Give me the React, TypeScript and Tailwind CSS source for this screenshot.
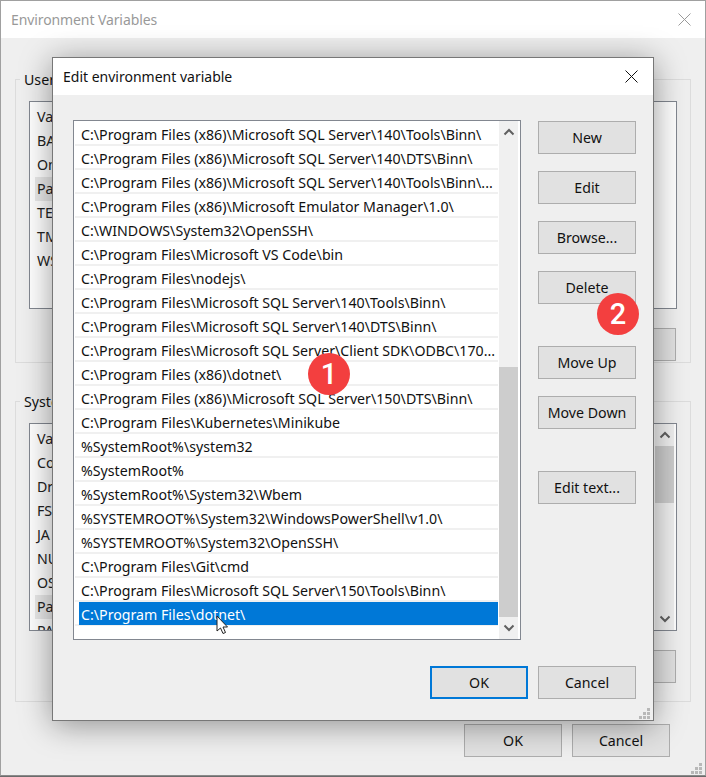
const paths = [
  "C:\\Program Files (x86)\\Microsoft SQL Server\\140\\Tools\\Binn\\",
  "C:\\Program Files (x86)\\Microsoft SQL Server\\140\\DTS\\Binn\\",
  "C:\\Program Files (x86)\\Microsoft SQL Server\\140\\Tools\\Binn\\...",
  "C:\\Program Files (x86)\\Microsoft Emulator Manager\\1.0\\",
  "C:\\WINDOWS\\System32\\OpenSSH\\",
  "C:\\Program Files\\Microsoft VS Code\\bin",
  "C:\\Program Files\\nodejs\\",
  "C:\\Program Files\\Microsoft SQL Server\\140\\Tools\\Binn\\",
  "C:\\Program Files\\Microsoft SQL Server\\140\\DTS\\Binn\\",
  "C:\\Program Files\\Microsoft SQL Server\\Client SDK\\ODBC\\170...",
  "C:\\Program Files (x86)\\dotnet\\",
  "C:\\Program Files (x86)\\Microsoft SQL Server\\150\\DTS\\Binn\\",
  "C:\\Program Files\\Kubernetes\\Minikube",
  "%SystemRoot%\\system32",
  "%SystemRoot%",
  "%SystemRoot%\\System32\\Wbem",
  "%SYSTEMROOT%\\System32\\WindowsPowerShell\\v1.0\\",
  "%SYSTEMROOT%\\System32\\OpenSSH\\",
  "C:\\Program Files\\Git\\cmd",
  "C:\\Program Files\\Microsoft SQL Server\\150\\Tools\\Binn\\",
  "C:\\Program Files\\dotnet\\",
];

function Btn({ label, blue }: { label: string; blue?: boolean }) {
  return (
    <button
      className={
        blue
          ? "w-[98px] h-[33px] shrink-0 bg-[#e1e1e1] border-2 border-[#0078d7] text-[14.2px] text-[#111]"
          : "w-[98px] h-[33px] shrink-0 bg-[#e1e1e1] border border-[#adadad] text-[14.2px] text-[#111]"
      }
    >
      {label}
    </button>
  );
}

function Chevron({ down }: { down?: boolean }) {
  return (
    <svg width="12" height="8" viewBox="0 0 12 8" className="text-[#606060]">
      <path
        d={down ? "M1.5 1.5 L6 6 L10.5 1.5" : "M1.5 6.5 L6 2 L10.5 6.5"}
        fill="none"
        stroke="currentColor"
        strokeWidth="2"
      />
    </svg>
  );
}

function X({ color }: { color: string }) {
  return (
    <svg width="13" height="13" viewBox="0 0 13 13">
      <path d="M0.5 0.5 L12.5 12.5 M12.5 0.5 L0.5 12.5" stroke={color} strokeWidth="1" fill="none" />
    </svg>
  );
}

function Grip() {
  const dots = [
    [8, 0],
    [4, 4],
    [8, 4],
    [0, 8],
    [4, 8],
    [8, 8],
  ];
  return (
    <svg width="11" height="11" viewBox="0 0 11 11">
      {dots.map(([x, y]) => (
        <rect key={`${x}-${y}`} x={x} y={y} width="3" height="3" fill="#b8b8b8" />
      ))}
    </svg>
  );
}

function BackRow({ label, active }: { label: string; active?: boolean }) {
  return (
    <div
      className={
        active
          ? "h-6 ml-[5px] w-[100px] pl-[2px] leading-6 bg-[#e9e9e9] whitespace-nowrap"
          : "h-6 ml-[5px] pl-[2px] leading-6 whitespace-nowrap"
      }
    >
      {label}
    </div>
  );
}

function Group({
  title,
  rows,
  height,
  scroll,
}: {
  title: string;
  rows: [string, boolean?][];
  height: string;
  scroll?: boolean;
}) {
  return (
    <div className={`relative ${height} border border-[#dcdcdc] px-[13px] pt-[21px]`}>
      <div className="absolute left-[4px] top-[-12px] bg-[#efefef] px-[4px] leading-6">{title}</div>
      <div className="flex h-[208px] border border-[#828790] bg-white overflow-hidden">
        <div className="flex-1 pt-[3px] overflow-hidden text-[#222]">
          {rows.map(([r, a], i) => (
            <BackRow key={i} label={r} active={a} />
          ))}
        </div>
        {scroll && (
          <div className="w-[19px] mr-[2px] flex flex-col bg-[#f0f0f0] items-center">
            <div className="h-[22px] flex items-center justify-center shrink-0">
              <Chevron />
            </div>
            <div className="w-full h-[57px] bg-[#cdcdcd] shrink-0" />
            <div className="flex-1" />
            <div className="h-[22px] flex items-center justify-center shrink-0">
              <Chevron down />
            </div>
          </div>
        )}
      </div>
      <div className="flex justify-end pr-[1px] mt-[19px]">
        <Btn label="Delete" />
      </div>
    </div>
  );
}

export default function App() {
  return (
    <div className="relative w-[706px] h-[777px] overflow-hidden bg-[#6b6b6b] text-[14.2px] text-[#111] [font-family:'Noto_Sans',sans-serif]">
      {/* parent window */}
      <div className="flex flex-col h-[776px] border border-[#a0a0a0] border-b-[#8a8a8a] bg-[#efefef]">
        <div className="h-[37px] shrink-0 bg-white flex items-center justify-between pl-[10px] pr-[14px] text-[#999] text-[14px] tracking-[-0.1px]">
          <span>Environment Variables</span>
          <X color="#9a9a9a" />
        </div>
        <div className="flex flex-col px-[14px] pt-[41px] gap-[38px]">
          <Group
            title="User variables"
            height="h-[284px]"
            rows={[["Variable"], ["BA"], ["On"], ["Path", true], ["TEMP"], ["TMP"], ["WS"]]}
          />
          <Group
            title="System variables"
            height="h-[301px]"
            scroll
            rows={[["Variable"], ["Co"], ["Dr"], ["FS"], ["JA"], ["NU"], ["OS"], ["Path", true], ["PA"]]}
          />
        </div>
        <div className="flex justify-end gap-[10px] pr-[35px] mt-[22px]">
          <Btn label="OK" />
          <Btn label="Cancel" />
        </div>
        <div className="flex justify-end pr-[3px] mt-[6px]">
          <Grip />
        </div>
      </div>

      {/* child dialog */}
      <div className="absolute left-[52px] top-[57px] w-[602px] h-[664px] flex flex-col border border-[#777] bg-[#efefef] shadow-[0_4px_30px_rgba(0,0,0,0.4)]">
        <div className="h-[37px] shrink-0 bg-white flex items-center justify-between pl-[10px] pr-[15px]">
          <span className="text-[14px] text-[#111]">Edit environment variable</span>
          <X color="#111" />
        </div>
        <div className="relative flex-1 flex flex-col pt-[25px] pl-[20px] pr-[17px]">
          <div className="flex gap-[17px]">
            <div className="flex w-[448px] h-[520px] border border-[#828790] bg-white">
              <div className="w-[424px] pl-[1px] pt-[1px]">
                {paths.map((p, i) =>
                  i === paths.length - 1 ? (
                    <div key={p} className="h-6 pl-[4px] border-b-2 border-[#f0f0f0]">
                      <div className="h-[23px] pl-[2px] pt-[1px] leading-[24px] bg-[#0078d7] text-white whitespace-nowrap">{p}</div>
                    </div>
                  ) : (
                    <div key={p} className="h-6 pl-[6px] pt-[1px] leading-[24px] border-b-2 border-[#f0f0f0] whitespace-nowrap">
                      {p}
                    </div>
                  ),
                )}
              </div>
              <div className="w-[19px] ml-[1px] mr-[2px] flex flex-col bg-[#f0f0f0]">
                <div className="h-[22px] flex items-center justify-center shrink-0">
                  <Chevron />
                </div>
                <div className="flex-1" />
                <div className="h-[250px] bg-[#cdcdcd] shrink-0" />
                <div className="h-[22px] flex items-center justify-center shrink-0">
                  <Chevron down />
                </div>
              </div>
            </div>
            <div className="flex flex-col pt-[1px]">
              <div className="flex flex-col gap-[17px]">
                <Btn label="New" />
                <Btn label="Edit" />
                <Btn label="Browse..." />
                <Btn label="Delete" />
              </div>
              <div className="flex flex-col gap-[17px] mt-[42px]">
                <Btn label="Move Up" />
                <Btn label="Move Down" />
              </div>
              <div className="mt-[42px]">
                <Btn label="Edit text..." />
              </div>
            </div>
          </div>
          <div className="flex justify-end gap-[10px] mt-[26px]">
            <Btn label="OK" blue />
            <Btn label="Cancel" />
          </div>
          <div className="absolute right-[3px] bottom-[1px]">
            <Grip />
          </div>
        </div>
      </div>

      {/* annotations */}
      <div className="absolute left-[308px] top-[353px] w-[42px] h-[42px] rounded-full bg-[#f33f3f] text-white flex items-center justify-center text-[29px] font-medium leading-none [font-family:Roboto,sans-serif]">
        1
      </div>
      <div className="absolute left-[597px] top-[293px] w-[42px] h-[42px] rounded-full bg-[#f33f3f] text-white flex items-center justify-center text-[29px] font-medium leading-none [font-family:Roboto,sans-serif]">
        2
      </div>
      <svg className="absolute left-[216px] top-[615px]" width="13" height="20" viewBox="0 0 13 20">
        <path d="M1 1 L1 16 L4.5 13 L7 18.5 L9.5 17.5 L7 12 L11.5 12 Z" fill="#fff" stroke="#222" strokeWidth="1" />
      </svg>
    </div>
  );
}
